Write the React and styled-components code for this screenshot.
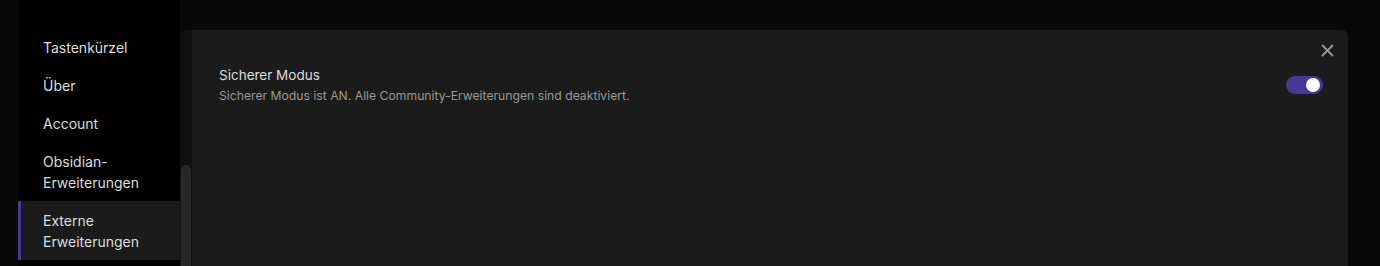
import React from 'react'
import styled, { createGlobalStyle } from 'styled-components'

const GlobalStyle = createGlobalStyle`
  html, body {
    margin: 0;
    padding: 0;
    background: #080808;
    height: 266px;
    overflow: hidden;
  }
  body {
    font-family: Inter, "Noto Sans", sans-serif;
    -webkit-font-smoothing: antialiased;
  }
`

const Shell = styled.div`
  display: flex;
  align-items: flex-start;
  height: 266px;
  padding-left: 18px;
  padding-right: 32px;
  box-sizing: border-box;
`

const Sidebar = styled.nav`
  width: 162px;
  height: 266px;
  padding-top: 28px;
  box-sizing: border-box;
  background: #000;
  display: flex;
  flex-direction: column;
`

const NavItem = styled.div`
  font-size: 14px;
  line-height: 21px;
  color: #dcddde;
  padding: 8.5px 16px 8.5px 22px;
  border-left: 3px solid ${p => (p.active ? '#483699' : 'transparent')};
  background: ${p => (p.active ? '#1b1b1b' : 'transparent')};
`

const ScrollTrack = styled.div`
  width: 12px;
  height: 236px;
  margin-top: 30px;
  background: #101010;
  border-radius: 6px 0 0 0;
  display: flex;
  flex-direction: column;
  padding-top: 135px;
  box-sizing: border-box;
  align-items: center;
`

const ScrollThumb = styled.div`
  width: 10px;
  flex: 1;
  background: #282828;
  border-radius: 5px 5px 0 0;
`

const Panel = styled.main`
  position: relative;
  flex: 1;
  height: 236px;
  margin-top: 30px;
  background: #1b1b1b;
  border-top-right-radius: 6px;
  padding: 35px 25px 0 27px;
  box-sizing: border-box;
`

const CloseButton = styled.button`
  position: absolute;
  top: 13px;
  right: 14px;
  width: 14px;
  height: 14px;
  padding: 0;
  border: 0;
  background: none;
  color: #9a9a9a;
  display: flex;
  align-items: center;
  justify-content: center;
`

const SettingRow = styled.div`
  display: flex;
  align-items: center;
  justify-content: space-between;
`

const SettingInfo = styled.div`
  display: flex;
  flex-direction: column;
`

const SettingName = styled.div`
  font-size: 13.5px;
  line-height: 21px;
  color: #dcddde;
`

const SettingDesc = styled.div`
  font-size: 12.2px;
  line-height: 19px;
  color: #999;
`

const Toggle = styled.div`
  width: 37px;
  height: 18px;
  border-radius: 9px;
  background: #483699;
  display: flex;
  align-items: center;
  justify-content: ${p => (p.on ? 'flex-end' : 'flex-start')};
  padding: 0 3px;
  box-sizing: border-box;
`

const Knob = styled.div`
  width: 14px;
  height: 14px;
  border-radius: 50%;
  background: #fff;
`

const items = [
  ['Tastenkürzel'],
  ['Über'],
  ['Account'],
  ['Obsidian-', 'Erweiterungen'],
  ['Externe', 'Erweiterungen'],
]

export default function App() {
  return (
    <>
      <GlobalStyle />
      <Shell>
        <Sidebar>
          {items.map((lines, i) => (
            <NavItem key={i} active={i === 4}>
              {lines.map((l, j) => (
                <div key={j}>{l}</div>
              ))}
            </NavItem>
          ))}
        </Sidebar>
        <ScrollTrack>
          <ScrollThumb />
        </ScrollTrack>
        <Panel>
          <CloseButton aria-label="Schließen">
            <svg width="13" height="13" viewBox="0 0 13 13" fill="none" stroke="currentColor" strokeWidth="1.8" strokeLinecap="round">
              <path d="M1.5 1.5l10 10M11.5 1.5l-10 10" />
            </svg>
          </CloseButton>
          <SettingRow>
            <SettingInfo>
              <SettingName>Sicherer Modus</SettingName>
              <SettingDesc>Sicherer Modus ist AN. Alle Community-Erweiterungen sind deaktiviert.</SettingDesc>
            </SettingInfo>
            <Toggle on>
              <Knob />
            </Toggle>
          </SettingRow>
        </Panel>
      </Shell>
    </>
  )
}
